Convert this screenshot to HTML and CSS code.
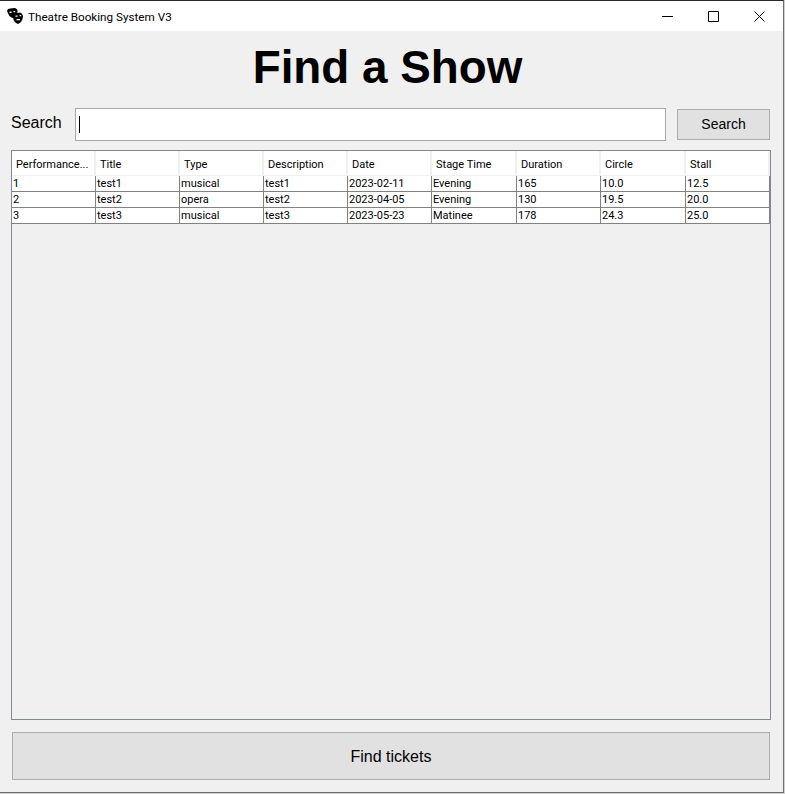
FILE: index.html
```html
<!DOCTYPE html>
<html lang="en">
<head>
  <meta charset="UTF-8">
  <title>Theatre Booking System V3</title>
  <link rel="stylesheet" href="styles.css">
</head>
<body>
  <div class="window">
    <div class="titlebar">
      <svg class="app-icon" width="16" height="16" viewBox="0 0 16 16">
        <path fill="#000" d="M0 2.500 Q1 .500 3 .500 L8 0 Q11 1 10.500 4 Q9.500 9 6 10 Q1.500 9 0 2.500Z"/>
        <path fill="#000" d="M6.500 6 L13 4.500 Q16 5.500 16 9 Q15 14.500 11 16 Q6.500 14.500 6 9Z"/>
        <path fill="#fff" d="M2.500 3.500h2v1.400h-2zM6.500 3h1.700v1.300h-1.700zM8.500 7.500h2v1.300h-2zM12.500 7h1.700v1.300h-1.700zM9.500 11h3.500v1.200h-3.500z"/>
      </svg>
      <span class="window-title">Theatre Booking System V3</span>
      <div class="window-controls">
        <svg width="11" height="11" viewBox="0 0 11 11"><path d="M0 5.500h11" stroke="#000" fill="none"/></svg>
        <svg width="11" height="11" viewBox="0 0 11 11"><path d="M.5.500h10v10h-10z" stroke="#000" fill="none"/></svg>
        <svg width="11" height="11" viewBox="0 0 11 11"><path d="M.5.500l10 10M10.500.500l-10 10" stroke="#000" fill="none"/></svg>
      </div>
    </div>

    <div class="content">
      <h1>Find a Show</h1>

      <div class="search-row">
        <label for="search-input">Search</label>
        <div class="search-input" id="search-input"><span class="caret"></span></div>
        <button class="btn btn-search">Search</button>
      </div>

      <div class="table-frame">
        <table>
          <thead>
            <tr>
              <th>Performance...</th><th>Title</th><th>Type</th><th>Description</th><th>Date</th><th>Stage Time</th><th>Duration</th><th>Circle</th><th>Stall</th>
            </tr>
          </thead>
          <tbody>
            <tr>
              <td>1</td><td>test1</td><td>musical</td><td>test1</td><td>2023-02-11</td><td>Evening</td><td>165</td><td>10.0</td><td>12.5</td>
            </tr>
            <tr>
              <td>2</td><td>test2</td><td>opera</td><td>test2</td><td>2023-04-05</td><td>Evening</td><td>130</td><td>19.5</td><td>20.0</td>
            </tr>
            <tr>
              <td>3</td><td>test3</td><td>musical</td><td>test3</td><td>2023-05-23</td><td>Matinee</td><td>178</td><td>24.3</td><td>25.0</td>
            </tr>
          </tbody>
        </table>
      </div>

      <button class="btn btn-tickets">Find tickets</button>
    </div>
  </div>
</body>
</html>
```

FILE: styles.css
```css
html {
  margin: 0;
  padding: 0;
}
body {
  margin: 0;
  background: #d0d0d0;
  color: #000;
  font-family: "Liberation Sans", Arial, sans-serif;
  overflow: hidden;
}

.window {
  width: 783px;
  height: 791px;
  background: #f0f0f0;
  border-top: 1px solid #2b2b2b;
  border-right: 1px solid #6e6e6e;
  border-bottom: 1px solid #6e6e6e;
  display: flex;
  flex-direction: column;
}

.titlebar {
  height: 30px;
  flex: none;
  background: #fff;
  display: flex;
  align-items: center;
  padding-left: 7px;
}
.app-icon {
  margin-right: 5px;
}
.window-title {
  font-family: Roboto, sans-serif;
  font-size: 11.700px;
  padding-top: 1px;
}
.window-controls {
  margin-left: auto;
  display: flex;
  gap: 35px;
  padding-right: 18px;
}

.content {
  flex: 1;
  display: flex;
  flex-direction: column;
  padding: 0 12px 12px 11px;
}

h1 {
  margin: 9px 7px 0 0;
  height: 68px;
  line-height: 56px;
  font-size: 45.800px;
  font-weight: bold;
  text-align: center;
}

.search-row {
  display: flex;
  align-items: center;
  height: 33px;
  margin-bottom: 9px;
}
.search-row label {
  font-size: 16px;
  width: 64px;
  padding-bottom: 3px;
}
.search-input {
  width: 586px;
  height: 31px;
  background: #fff;
  border: 1px solid #a8a8a8;
  display: flex;
  align-items: center;
  padding-left: 3px;
}
.caret {
  width: 1px;
  height: 17px;
  background: #000;
}

.btn {
  background: #e1e1e1;
  border: 1px solid #adadad;
  color: #000;
  font-family: "Liberation Sans", Arial, sans-serif;
  padding: 0;
}
.btn-search {
  width: 93px;
  height: 31px;
  margin-left: 11px;
  padding-bottom: 2px;
  font-size: 14px;
}
.btn-tickets {
  height: 48px;
  margin: 12px 1px 0 1px;
  padding-top: 1px;
  font-size: 16px;
}

.table-frame {
  flex: 1;
  border: 1px solid #828790;
  min-height: 0;
}
table {
  table-layout: fixed;
  border-collapse: separate;
  border-spacing: 0;
  width: 758px;
  font-family: Roboto, sans-serif;
  font-size: 11px;
}
th, td {
  box-sizing: border-box;
  padding: 0;
  overflow: hidden;
  white-space: nowrap;
  text-align: left;
  font-weight: normal;
}
th {
  height: 25px;
  background: #fff;
  padding: 2px 0 0 4px;
  border-right: 2px solid #f0f0f0;
  border-bottom: 1px solid #f0f0f0;
}
td {
  height: 16px;
  line-height: 14px;
  background: #fff;
  padding-left: 1px;
  border-right: 1px solid #828282;
  border-bottom: 1px solid #828282;
}
th:nth-child(1) { width: 84px; }
th:nth-child(2) { width: 84px; }
th:nth-child(3) { width: 84px; }
th:nth-child(4) { width: 84px; }
th:nth-child(5) { width: 84px; }
th:nth-child(6) { width: 85px; }
th:nth-child(7) { width: 84px; }
th:nth-child(8) { width: 85px; }
th:nth-child(9) { width: 84px; }
```
